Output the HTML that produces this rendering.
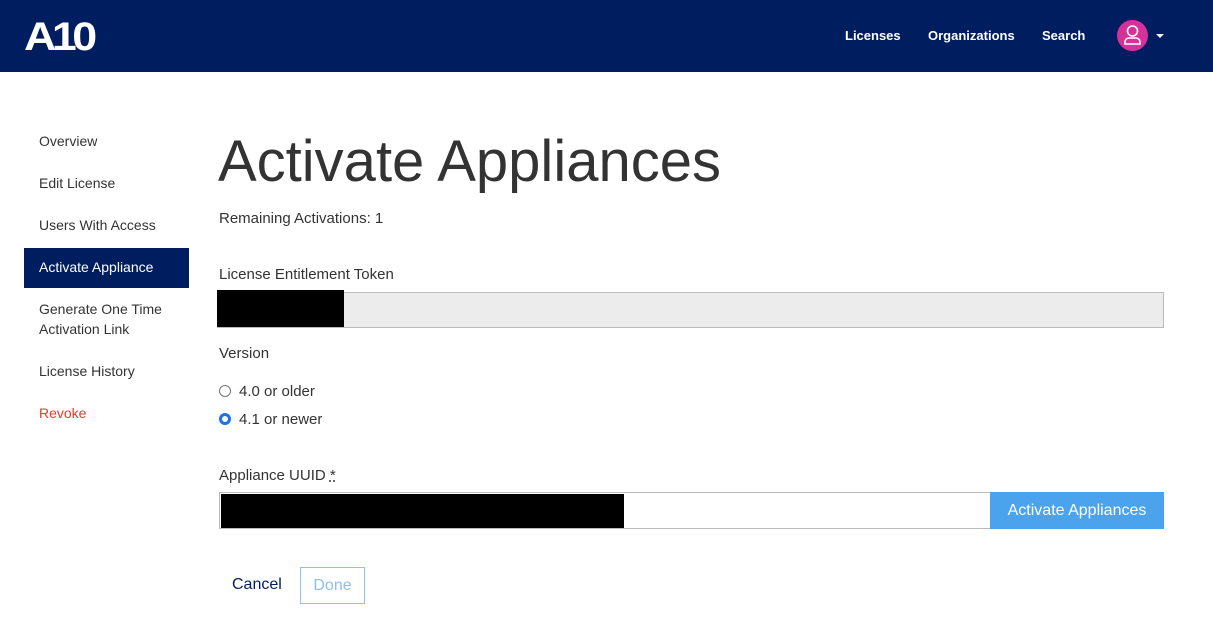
<!DOCTYPE html>
<html><head><style>
body{margin:0;width:1213px;height:629px;background:#fff;font-family:"Liberation Sans",sans-serif;color:#333;position:relative;overflow:hidden}
.hdr{position:absolute;left:0;top:0;width:1213px;height:72px;background:#001e5f}
.logo{position:absolute;left:24px;top:15px;color:#fff;font-weight:bold;font-size:40px;letter-spacing:-4px;line-height:44px;transform:scaleX(1.12);transform-origin:left}
.nav{position:absolute;top:28px;color:#fff;font-size:13px;font-weight:bold}
.av{position:absolute;left:1117px;top:20px;width:31px;height:31px;border-radius:50%;background:#d6309a}
.a{position:absolute;font-size:14px;color:#333}
.side{position:absolute;left:39px;font-size:14px;color:#333;line-height:20px}
.in{position:absolute;border:1px solid #bbb;box-sizing:border-box}
</style></head><body>
<div class="hdr">
<div class="logo">A10</div>
<div class="nav" style="left:845px">Licenses</div>
<div class="nav" style="left:928px">Organizations</div>
<div class="nav" style="left:1042px">Search</div>
<div class="av"><svg width="31" height="31" viewBox="0 0 31 31" fill="none" stroke="#fff" stroke-width="1.6"><circle cx="15.5" cy="11" r="5"/><path d="M8 24v-2a4 4 0 0 1 4-4h7a4 4 0 0 1 4 4v2z"/></svg></div>
<div style="position:absolute;left:1156px;top:34px;border:4px solid transparent;border-top:4px solid #fff;border-bottom:0"></div>
</div>
<div class="side" style="top:131px">Overview</div>
<div class="side" style="top:173px">Edit License</div>
<div class="side" style="top:215px">Users With Access</div>
<div style="position:absolute;left:24px;top:248px;width:165px;height:40px;background:#001e5f"></div>
<div class="side" style="top:257px;color:#fff">Activate Appliance</div>
<div class="side" style="top:299px">Generate One Time<br>Activation Link</div>
<div class="side" style="top:361px">License History</div>
<div class="side" style="top:403px;color:#e8392b">Revoke</div>
<div style="position:absolute;left:218px;top:129px;font-size:58px;color:#333;line-height:66px">Activate Appliances</div>
<div class="a" style="left:219px;top:210px;font-size:15px">Remaining Activations: 1</div>
<div class="a" style="left:219px;top:266px;font-size:15px">License Entitlement Token</div>
<div class="in" style="left:217px;top:292px;width:947px;height:36px;background:#ececec"></div>
<div style="position:absolute;left:217px;top:290px;width:127px;height:37px;background:#000"></div>
<div class="a" style="left:219px;top:345px;font-size:15px">Version</div>
<div style="position:absolute;left:219px;top:385px;width:12px;height:12px;border:1px solid #777;border-radius:50%;box-sizing:border-box"></div>
<div class="a" style="left:239px;top:383px;font-size:15px">4.0 or older</div>
<div style="position:absolute;left:219px;top:413px;width:12px;height:12px;border:3px solid #1a73e8;border-radius:50%;box-sizing:border-box"></div>
<div class="a" style="left:239px;top:411px;font-size:15px">4.1 or newer</div>
<div class="a" style="left:219px;top:467px;font-size:15px">Appliance UUID <span style="text-decoration:underline dotted">*</span></div>
<div class="in" style="left:219px;top:492px;width:772px;height:37px"></div>
<div style="position:absolute;left:221px;top:494px;width:403px;height:34px;background:#000"></div>
<div style="position:absolute;left:990px;top:492px;width:174px;height:37px;background:#4ba3ee;color:#fff;font-size:16px;text-align:center;line-height:37px">Activate Appliances</div>
<div class="a" style="left:232px;top:576px;font-size:16px;color:#001e5f">Cancel</div>
<div style="position:absolute;left:300px;top:567px;width:65px;height:37px;border:1px solid #8cc0f5;box-sizing:border-box;color:#8cc0f5;font-size:16px;text-align:center;line-height:35px">Done</div>
</body></html>
